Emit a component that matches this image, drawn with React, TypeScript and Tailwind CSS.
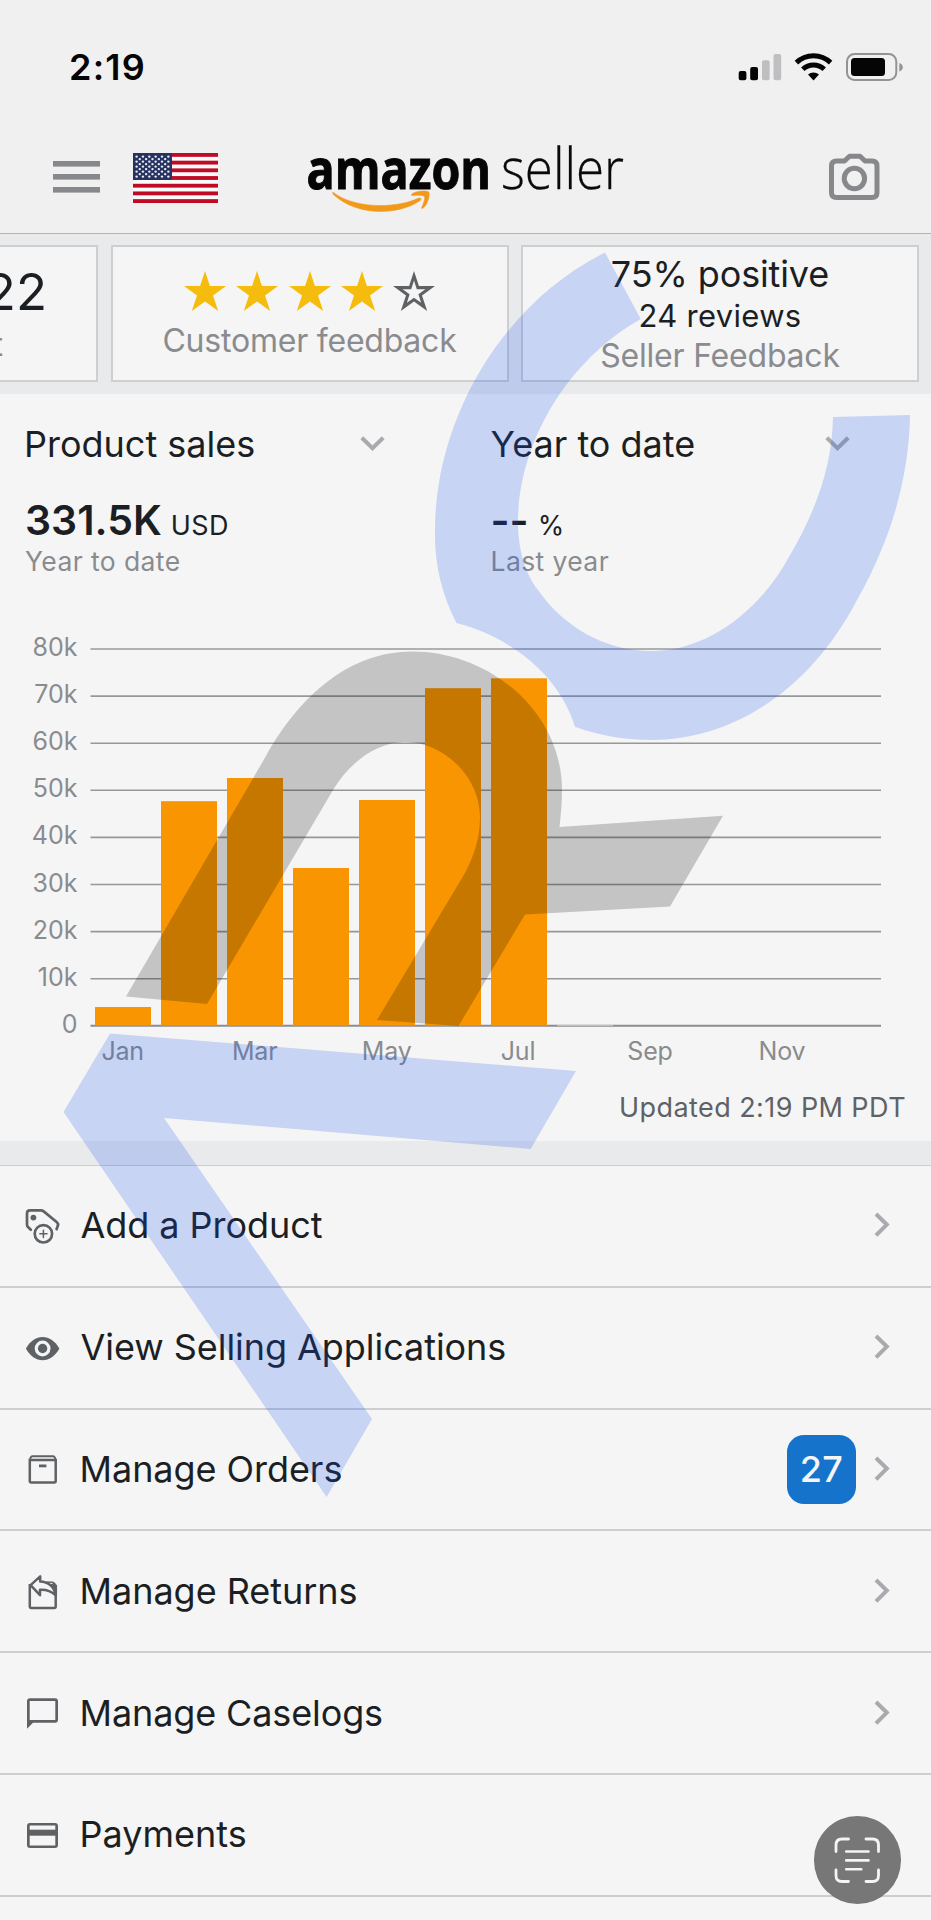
import type { ReactNode } from "react";

const STAR = "M21 0 L25.9 15 H42 L29 24.6 L34.2 40 L21 30.6 L7.8 40 L13 24.6 L0 15 H16.1 Z";

function StatusIcons() {
  return (
    <svg width="168" height="34" viewBox="737 50 168 34">
      <rect x="738.7" y="71" width="7.7" height="9.3" rx="2" fill="#050505" />
      <rect x="750.2" y="67" width="7.8" height="13.3" rx="2" fill="#050505" />
      <rect x="762" y="60.3" width="7.7" height="20" rx="2" fill="#bfbfc1" />
      <rect x="773.5" y="54" width="7.7" height="26.3" rx="2" fill="#bfbfc1" />
      <g fill="none" stroke="#050505" strokeWidth="5">
        <path d="M796.4 62.6 A24.5 24.5 0 0 1 830.6 62.6" />
        <path d="M802.8 69.2 A15.5 15.5 0 0 1 824.2 69.2" />
      </g>
      <path d="M808 74.6 A8 8 0 0 1 819 74.6 L813.5 80.4 Z" fill="#050505" />
      <rect x="847" y="54" width="49.3" height="26" rx="7.5" fill="none" stroke="#939396" strokeWidth="2" />
      <rect x="851" y="58" width="34" height="18" rx="3.5" fill="#050505" />
      <path d="M899.3 63 C904 64.5 904 70 899.3 71.5 Z" fill="#939396" />
    </svg>
  );
}

function Flag() {
  const stripes = [0, 2, 4, 6, 8, 10, 12];
  const starRows = [0, 1, 2, 3, 4, 5, 6, 7, 8];
  return (
    <svg width="85" height="50" viewBox="0 0 85 50">
      <rect width="85" height="50" fill="#fafafa" />
      {stripes.map((s) => (
        <rect key={s} y={s * 3.846} width="85" height="3.846" fill="#c00b26" />
      ))}
      <rect width="39" height="27" fill="#263260" />
      {starRows.map((r) =>
        Array.from({ length: r % 2 ? 5 : 6 }, (_, c) => (
          <circle key={`${r}-${c}`} cx={3.6 + c * 6.35 + (r % 2 ? 3.17 : 0)} cy={3.6 + r * 2.5} r="1.2" fill="#e9ebf2" />
        ))
      )}
    </svg>
  );
}

function Logo() {
  return (
    <svg width="330" height="90" viewBox="300 133 330 90" className="overflow-visible">
      <text x="306.5" y="188.6" textLength="184.5" lengthAdjust="spacingAndGlyphs" fill="#050505" stroke="#050505" strokeWidth="1" className="font-['Open_Sans'] text-[56px] font-bold">
        amazon
      </text>
      <text x="501" y="188.6" textLength="123" lengthAdjust="spacingAndGlyphs" fill="#0a0a0a" stroke="#0a0a0a" strokeWidth="0.3" className="font-['Open_Sans'] text-[57px] font-light">
        seller
      </text>
      <path d="M333.3 192.4 C352 207.4 393 210 419 198 C421 197.4 421.6 199.4 420 200.7 C396 216.4 356 215.4 333.3 194.4 C332.4 193 332.6 192.2 333.3 192.4 Z" fill="#f3991a" stroke="#f3991a" strokeWidth="0.6" />
      <path d="M411.8 194 C416 190.8 425 190.1 428.7 191.8 C430.6 194.9 427.5 204.9 423 208.2 C422 208.9 421.4 208.4 421.8 207.4 C423.4 203.8 425.4 198.4 424.4 196.6 C423 194.8 416.5 195.4 412.6 195.6 C411.4 195.6 411.2 194.6 411.8 194 Z" fill="#f3991a" stroke="#f3991a" strokeWidth="0.5" />
    </svg>
  );
}

function Header() {
  return (
    <header className="h-[234px] border-b border-[#b4b4b8] bg-[#f0f0f1]">
      <div className="flex h-[134px] items-center justify-between pr-[26px] pl-[69px]">
        <span className="text-[36px] leading-[44px] font-semibold tracking-[1.2px] text-[#050505]">2:19</span>
        <StatusIcons />
      </div>
      <div className="flex h-[88px] items-center">
        <svg width="47" height="34" viewBox="0 0 47 34" className="ml-[53px]" fill="#87888b">
          <rect y="0" width="47" height="5.6" />
          <rect y="13" width="47" height="5.6" />
          <rect y="26" width="47" height="5.6" />
        </svg>
        <div className="ml-[33px]">
          <Flag />
        </div>
        <div className="ml-[82px]">
          <Logo />
        </div>
        <svg width="52" height="50" viewBox="829 153 52 50" className="mr-[50px] ml-auto" fill="none" stroke="#87888b" strokeWidth="5">
          <path strokeLinejoin="round" d="M831.5 166 Q831.5 161 836.5 161 H844.5 L849.5 156.2 H860 L865 161 H872 Q877 161 877 166 V192.5 Q877 197.5 872 197.5 H836.5 Q831.5 197.5 831.5 192.5 Z" />
          <circle cx="854.4" cy="178.5" r="10.2" />
        </svg>
      </div>
    </header>
  );
}

function Card({ className, children }: { className: string; children: ReactNode }) {
  return (
    <div className={`flex h-[137px] w-[398px] shrink-0 flex-col border-2 border-[#cdcfd1] bg-[#f5f5f5] ${className}`}>
      {children}
    </div>
  );
}

function Cards() {
  return (
    <section className="h-[160px] overflow-hidden bg-[#e9eaec] pt-[11px]">
      <div className="-ml-[300px] flex gap-[12.5px]">
        <Card className="items-end">
          <span className="mt-[15px] pr-[49px] text-[51px] leading-[60px] text-[#1b1f24]">22</span>
          <span className="mt-[3px] pr-[93px] text-[32px] leading-[40px] text-[#8a8b8f]">t</span>
        </Card>
        <Card className="items-center pt-6">
          <div className="flex gap-[10.2px]">
            {[0, 1, 2, 3].map((i) => (
              <svg key={i} width="42" height="40" viewBox="0 0 42 40">
                <path d={STAR} fill="#f5bc0e" />
              </svg>
            ))}
            <svg width="42" height="40" viewBox="0 0 42 40">
              <path fillRule="evenodd" fill="#5f6265" d={`${STAR} M21 9.6 L23.8 18.3 H32.4 L25.4 23.3 L28.1 31.8 L21 26.7 L13.9 31.8 L16.6 23.3 L9.6 18.3 H18.2 Z`} />
            </svg>
          </div>
          <span className="mt-[10px] text-[32px] leading-[40px] tracking-[-0.22px] text-[#8a8b8f]">Customer feedback</span>
        </Card>
        <Card className="items-center pt-[5px] text-[#1b1f24]">
          <span className="text-[36px] leading-[44px] tracking-[-0.12px]">75% positive</span>
          <span className="text-[31px] leading-[40px] tracking-[0.3px]">24 reviews</span>
          <span className="text-[32px] leading-[40px] tracking-[-0.2px] text-[#8a8b8f]">Seller Feedback</span>
        </Card>
      </div>
    </section>
  );
}

function Summary({ title, value, unit, note, titleClass }: { title: string; value: string; unit: string; note: string; titleClass: string }) {
  return (
    <div className="pl-[25px]">
      <div className="flex h-[40px] items-center justify-between pr-[81px]">
        <span className={`text-[36px] leading-[40px] text-[#1b1f24] ${titleClass}`}>{title}</span>
        <svg width="25" height="16" viewBox="0 0 25 16" fill="none" stroke="#a9aaad" strokeWidth="4">
          <path d="M1.8 1.7 L12.5 12.1 L23.2 1.7" />
        </svg>
      </div>
      <div className="mt-[31px] flex h-[50px] items-baseline gap-[9px] text-[#1b1f24]">
        <span className="text-[41px] leading-[50px] font-semibold">{value}</span>
        <span className="text-[27px] leading-none tracking-[0.4px]">{unit}</span>
      </div>
      <div className="text-[26.5px] leading-[33px] tracking-[0.4px] text-[#8a8b8f]">{note}</div>
    </div>
  );
}

const BARS = [
  [95, 1007],
  [161, 801.2],
  [227, 778],
  [293, 868],
  [359, 800],
  [425, 688.2],
  [491, 678.3],
];
const MONTHS: [string, number][] = [
  ["Jan", 122.7],
  ["Mar", 254.7],
  ["May", 386.7],
  ["Jul", 518],
  ["Sep", 650],
  ["Nov", 782],
];
const TICKS = ["80k", "70k", "60k", "50k", "40k", "30k", "20k", "10k", "0"];

function Chart() {
  return (
    <svg width="931" height="482" viewBox="0 610 931 482" className="block">
      {TICKS.map((t, i) => (
        <g key={t}>
          <line x1="90.5" x2="881" y1={649 + i * 47.1} y2={649 + i * 47.1} stroke={i === 8 ? "#8b8c91" : "#97989c"} strokeWidth={i === 8 ? 2 : 1.6} />
          <text x="77.5" y={655.8 + i * 47.15} textAnchor="end" fill="#8a8b8f" className="text-[25px]">
            {t}
          </text>
        </g>
      ))}
      {BARS.map(([x, y]) => (
        <rect key={x} x={x} y={y} width="56" height={1025.6 - y} fill="#f89500" />
      ))}
      <rect x="557" y="1025" width="56" height="0.5" fill="#f5f5f5" />
      {MONTHS.map(([m, x]) => (
        <text key={m} x={x} y="1060.4" textAnchor="middle" fill="#8a8b8f" className="text-[25px] tracking-[-0.2px]">
          {m}
        </text>
      ))}
    </svg>
  );
}

function Chevron() {
  return (
    <svg width="16" height="26" viewBox="0 0 16 26" fill="none" stroke="#a9aaad" strokeWidth="4">
      <path d="M2 2 L12.8 12.6 L2 23.4" />
    </svg>
  );
}

const G = "#5f6265";

const ICONS: Record<string, ReactNode> = {
  add: (
    <g fill="none" stroke={G} strokeWidth="2.7" strokeLinecap="round" strokeLinejoin="round">
      <path d="M8.8 23.8 L6 21 Q5 20 5 18.5 V7.4 Q5 4.4 8 4.4 H18.6 Q20.5 4.4 22 5.6 L34.6 16 Q37 18 35.6 20.2 L34.6 23.2" />
      <circle cx="21.4" cy="27.8" r="8.7" />
      <path d="M21.4 24.2 V31.4 M17.8 27.8 H25" strokeWidth="1.5" />
      <circle cx="11.4" cy="11.6" r="2.9" fill={G} stroke="none" />
    </g>
  ),
  view: (
    <g fill={G}>
      <path d="M3.9 20.5 C8 13 14 8.9 20.6 8.9 S33.2 13 37.4 20.5 C33.2 28 27.2 32.2 20.6 32.2 S8 28 3.9 20.5 Z" />
      <circle cx="20.6" cy="20.5" r="7.9" fill="#f5f5f5" />
      <circle cx="20.6" cy="20.5" r="4.7" />
    </g>
  ),
  orders: (
    <g fill="none" stroke={G} strokeWidth="2.5">
      <path d="M7.8 11 V32 Q7.8 33.5 9.3 33.5 H32.2 Q33.7 33.5 33.7 32 V11 Z" />
      <path d="M7.8 11.5 Q8.5 7.3 10.5 7.3 H31 Q33 7.3 33.7 11.5" strokeWidth="1.9" />
      <path d="M17 16.9 H24.4" strokeWidth="2.8" />
    </g>
  ),
  returns: (
    <g fill="none" stroke={G} strokeWidth="2.5" strokeLinejoin="round">
      <path d="M7.8 13 V35.6 Q7.8 36.9 9.3 36.9 H32.2 Q33.7 36.9 33.7 35.4 V14" />
      <path d="M24 10.8 H30.5 Q32.5 10.8 34.6 14.5 V24 Q31 17 26 14 Z" fill={G} strokeWidth="0.6" />
      <path d="M26 12.4 H30.5" stroke="#f5f5f5" strokeWidth="1" />
      <path d="M8.6 14.2 L18.2 5.4 V10.6 C26 11 32.6 15.5 33.4 24 C29 20 24 18.4 18 18.8 V24.2 Z" fill="#f5f5f5" />
    </g>
  ),
  cases: (
    <path fill={G} fillRule="evenodd" d="M8 5.2 H33 Q36 5.2 36 8.2 V26.8 Q36 29.8 33 29.8 H11 L5 35.8 V8.2 Q5 5.2 8 5.2 Z M7.7 7.9 V27.1 H33.3 V7.9 Z" />
  ),
  payments: (
    <g fill={G}>
      <path fillRule="evenodd" d="M8 8 H33 Q36 8 36 11 V30 Q36 33 33 33 H8 Q5 33 5 30 V11 Q5 8 8 8 Z M7.7 10.6 V30.4 H33.3 V10.6 Z" />
      <rect x="6" y="14.7" width="29" height="6" />
    </g>
  ),
};

const ROWS = [
  { icon: "add", label: "Add a Product", cls: "tracking-[-0.05px]" },
  { icon: "view", label: "View Selling Applications", cls: "tracking-[-0.05px]" },
  { icon: "orders", label: "Manage Orders", cls: "-ml-px tracking-[-0.05px]", badge: "27" },
  { icon: "returns", label: "Manage Returns", cls: "-ml-px tracking-[-0.03px]" },
  { icon: "cases", label: "Manage Caselogs", cls: "-ml-px tracking-[-0.12px]" },
  { icon: "payments", label: "Payments", cls: "-ml-px" },
];

function Menu() {
  return (
    <ul className="border-t border-[#cdced1]">
      {ROWS.map((r) => (
        <li key={r.label} className="flex h-[121.8px] items-center border-b-2 border-[#cdced1] pr-[41px] pl-[22px]">
          <svg width="40" height="40" viewBox="0 0 40 40" className="overflow-visible">
            {ICONS[r.icon]}
          </svg>
          <span className={`pb-px pl-[18.5px] text-[36px] leading-[44px] text-[#1b1f24] ${r.cls}`}>{r.label}</span>
          <div className="ml-auto flex items-center gap-[18px]">
            {r.badge && (
              <span className="flex h-[69px] w-[69px] items-center justify-center rounded-[17px] bg-[#1673cc] text-[36px] leading-none font-medium tracking-[0.4px] text-[#f5f5f5]">
                {r.badge}
              </span>
            )}
            {r.icon !== "payments" && (
              <span className="pb-px">
                <Chevron />
              </span>
            )}
          </div>
        </li>
      ))}
    </ul>
  );
}

function ScanButton() {
  return (
    <button className="absolute top-[1816px] left-[814px] flex h-[88px] w-[87px] items-center justify-center rounded-full bg-[#777777]">
      <svg width="47" height="46" viewBox="0 0 47 46" fill="none" stroke="#f4f4f5" strokeWidth="2.8" strokeLinecap="round">
        <path d="M2 14.5 V8 Q2 2 8 2 H14.5 M32 2 H38.5 Q44.5 2 44.5 8 V14.5 M44.5 33 V38.5 Q44.5 44.5 38.5 44.5 H32 M14.5 44.5 H8 Q2 44.5 2 38.5 V33" />
        <path d="M12.2 14.5 H34.5 M12.2 23.4 H34.5 M12.2 32.3 H27.3" strokeWidth="2.6" />
      </svg>
    </button>
  );
}

function Watermark() {
  return (
    <svg width="931" height="1920" viewBox="0 0 931 1920" className="pointer-events-none absolute top-0 left-0">
      <g fill="rgb(20,80,240)" fillOpacity="0.2">
        <path d="M605 252.5 L640.7 319 C565 362 518 445 518 523 C518 548 525 574 538 590 C563 626 604 651 651 651 C708 651 760 610 789 557 C817 509 832 466 833 417 L910 415 C909 478 891 540 857 600 C810 690 733 740 651 740 C624 740 597 735 575 726.8 C561 679 515 638 456.5 623 C442 595 434 564 435 528 C436 420 500 305 605 252.5 Z" />
        <path d="M110 1033.5 L576 1071 L530.6 1149 L164 1118 L372 1419 L326.6 1497 L63.5 1112 Z" />
      </g>
      <path
        fill="#000"
        fillOpacity="0.2"
        d="M126 996.5 L266 756 C300 695 350 651.5 412 651.5 C490 651.5 562 712 562 790 C562 803 561 814 559.5 827 L723 815.8 L670 906.5 L525 914.5 L458.5 1026 L377 1020 L465 873 C474 856 480 838 480 817 C480 778 445 742 405 742 C377 742 350 762 333 790 L207 1004 Z"
      />
    </svg>
  );
}

export default function App() {
  return (
    <main className="relative h-[1920px] w-[931px] overflow-hidden bg-[#f5f5f5] font-['Inter',sans-serif]">
      <Header />
      <Cards />
      <section className="pt-[30px]">
        <div className="grid grid-cols-2">
          <Summary title="Product sales" value="331.5K" unit="USD" note="Year to date" titleClass="-ml-px" />
          <Summary title="Year to date" value="--" unit="%" note="Last year" titleClass="" />
        </div>
        <div className="pt-8">
          <Chart />
        </div>
        <div className="h-[49px] pr-[25px] text-right text-[27px] leading-[32px] tracking-[0.42px] text-[#5f6265]">Updated 2:19 PM PDT</div>
      </section>
      <div className="h-[24px] bg-[#e9eaec]" />
      <Menu />
      <ScanButton />
      <Watermark />
    </main>
  );
}
